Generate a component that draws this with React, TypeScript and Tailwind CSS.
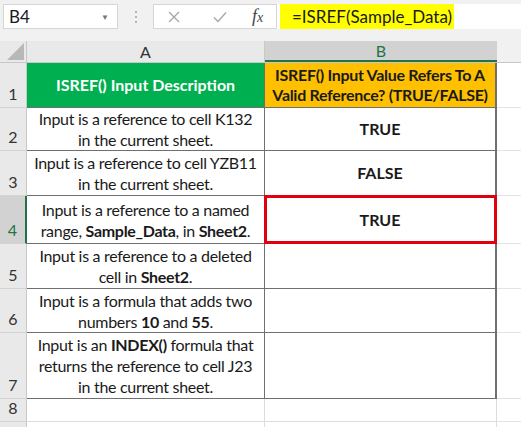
import React from "react";

const font = { fontFamily: "Lato, 'Open Sans', sans-serif" };

function RowNum({ n, h, active }: { n?: number; h: number; active?: boolean }) {
  return (
    <div
      className={`flex items-end justify-center pb-[1px] text-[16px] border-b border-[#d4d4d4] ${
        active
          ? "bg-[#d2d2d2] text-[#217346] border-r-2 border-r-[#217346]"
          : "bg-[#e9e9e9] text-[#333] border-r border-r-[#c8c8c8]"
      }`}
      style={{ height: h }}
    >
      {n}
    </div>
  );
}

export default function App() {
  const B = "font-bold";
  const rows: { n: number; h: number; a: React.ReactNode; b?: string; sel?: boolean }[] = [
    {
      n: 2,
      h: 43,
      a: (
        <>
          <div>Input is a reference to cell K132</div>
          <div>in the current sheet.</div>
        </>
      ),
      b: "TRUE",
    },
    {
      n: 3,
      h: 45,
      a: (
        <>
          <div>Input is a reference to cell YZB11</div>
          <div>in the current sheet.</div>
        </>
      ),
      b: "FALSE",
    },
    {
      n: 4,
      h: 48,
      a: (
        <>
          <div>Input is a reference to a named</div>
          <div>
            range, <span className={B}>Sample_Data</span>, in <span className={B}>Sheet2</span>.
          </div>
        </>
      ),
      b: "TRUE",
      sel: true,
    },
    {
      n: 5,
      h: 45,
      a: (
        <>
          <div>Input is a reference to a deleted</div>
          <div>
            cell in <span className={B}>Sheet2</span>.
          </div>
        </>
      ),
    },
    {
      n: 6,
      h: 44,
      a: (
        <>
          <div>Input is a formula that adds two</div>
          <div>
            numbers <span className={B}>10</span> and <span className={B}>55</span>.
          </div>
        </>
      ),
    },
    {
      n: 7,
      h: 66,
      a: (
        <>
          <div>
            Input is an <span className={B}>INDEX()</span> formula that
          </div>
          <div>returns the reference to cell J23</div>
          <div>in the current sheet.</div>
        </>
      ),
    },
  ];

  return (
    <div className="w-[521px] h-[427px] overflow-hidden bg-white text-[#1a1a1a]" style={font}>
      {/* formula bar */}
      <div className="h-[41px] bg-[#f1f1f1] flex items-start pt-[4px] pl-[3px]">
        <div className="w-[115px] h-[25px] bg-white border border-[#d6d6d6] flex items-center justify-between pl-[5px] pr-[8px] text-[17px]">
          <span>B4</span>
          <span className="text-[8px] text-[#777]">▼</span>
        </div>
        <div className="w-[35px] h-[25px] flex items-center justify-center">
          <div className="flex flex-col gap-[3px]">
            <div className="w-[2px] h-[2px] bg-[#b5b5b5]" />
            <div className="w-[2px] h-[2px] bg-[#b5b5b5]" />
            <div className="w-[2px] h-[2px] bg-[#b5b5b5]" />
          </div>
        </div>
        <div className="w-[124px] h-[25px] bg-white border border-[#d6d6d6] flex items-center">
          <svg width="16" height="16" viewBox="0 0 16 16" className="ml-[12px]">
            <path d="M3 3 L13 13 M13 3 L3 13" stroke="#a6a6a6" strokeWidth="1.3" fill="none" />
          </svg>
          <svg width="16" height="16" viewBox="0 0 16 16" className="ml-[30px]">
            <path d="M2 8.5 L6 12.5 L14 3.5" stroke="#a6a6a6" strokeWidth="1.3" fill="none" />
          </svg>
          <span
            className="ml-[24px] italic text-[18px] text-[#444]"
            style={{ fontFamily: "'Liberation Serif', serif" }}
          >
            f<span className="text-[14px]">x</span>
          </span>
        </div>
        <div className="flex-1 h-[25px] bg-white flex">
          <div className="ml-[3px] w-[174px] h-[25px] bg-[#ffff00] flex items-center pl-[12px] text-[17px]">
            =ISREF(Sample_Data)
          </div>
        </div>
      </div>

      {/* column headers */}
      <div className="flex h-[22px] bg-[#e9e9e9] border-b border-[#c8c8c8]">
        <div className="w-[27px] relative border-r border-[#c8c8c8]">
          <div
            className="absolute right-[2px] bottom-[2px] w-0 h-0"
            style={{ borderLeft: "17px solid transparent", borderBottom: "17px solid #b8b8b8" }}
          />
        </div>
        <div className="w-[238px] flex items-center justify-center text-[16px] text-[#333] border-r border-[#c8c8c8]">
          A
        </div>
        <div className="w-[232px] flex items-center justify-center text-[16px] text-[#217346] bg-[#d2d2d2] border-b-2 border-[#217346]">
          B
        </div>
        <div className="flex-1 bg-[#f1f1f1]" />
      </div>

      {/* body */}
      <div className="flex">
        <div className="w-[27px] flex flex-col">
          <RowNum n={1} h={45} />
          {rows.map((r) => (
            <RowNum key={r.n} n={r.n} h={r.h} active={r.sel} />
          ))}
          <RowNum n={8} h={23} />
          <RowNum h={23} />
        </div>
        <div className="w-[470px] flex flex-col">
          <div className="flex h-[45px] border-b border-[#6f6f6f]">
            <div className="w-[238px] bg-[#00b050] text-white font-bold text-[16px] flex items-center justify-center border-r border-[#6f6f6f]">
              ISREF() Input Description
            </div>
            <div className="w-[232px] bg-[#ffc000] font-bold text-[16px] leading-[20px] flex flex-col items-center justify-center border-r-2 border-[#6f6f6f] tracking-[-0.3px]">
              <div>ISREF() Input Value Refers To A</div>
              <div>Valid Reference? (TRUE/FALSE)</div>
            </div>
          </div>
          {rows.map((r) => (
            <div key={r.n} className="flex border-b border-[#6f6f6f]" style={{ height: r.h }}>
              <div className="w-[238px] flex flex-col items-center justify-center text-[16px] leading-[21px] whitespace-nowrap border-r border-[#6f6f6f] tracking-[-0.3px]">
                {r.a}
              </div>
              <div className="w-[232px] relative flex items-center justify-center font-bold text-[16px] border-r-2 border-[#6f6f6f]">
                {r.b}
                {r.sel && (
                  <div className="absolute left-[-1px] right-[-2px] top-[-1px] bottom-[-1px] border-[3px] border-[#e2000f]" />
                )}
              </div>
            </div>
          ))}
          <div className="flex h-[23px] border-b border-[#dcdcdc]">
            <div className="w-[238px] border-r border-[#dcdcdc]" />
            <div className="w-[232px] border-r border-[#dcdcdc]" />
          </div>
          <div className="flex h-[23px]">
            <div className="w-[238px] border-r border-[#dcdcdc]" />
            <div className="w-[232px] border-r border-[#dcdcdc]" />
          </div>
        </div>
        <div className="flex-1 flex flex-col">
          {[45, ...rows.map((r) => r.h), 23, 23].map((h, i) => (
            <div key={i} className="border-b border-[#e3e3e3]" style={{ height: h }} />
          ))}
        </div>
      </div>
    </div>
  );
}
